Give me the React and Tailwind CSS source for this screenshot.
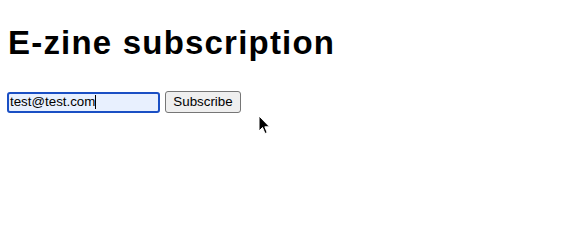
import React from "react";

export default function App() {
  return (
    <div className="relative w-[582px] h-[230px] bg-white text-black" style={{ fontFamily: '"Liberation Sans", Arial, sans-serif' }}>
      <div className="px-2 pt-[24px]">
        <h1 className="text-[33px] font-bold leading-[37px] m-0 tracking-[1.2px]">E-zine subscription</h1>
        <div className="flex items-center mt-[30px] gap-[5px]">
          <div className="w-[153px] h-[21px] ml-[-1px] border-2 border-[#1a4fc4] rounded-[3px] bg-[#e8f0fe] flex items-center px-[1px] text-[13.33px] leading-none">
            <span>test@test.com</span>
            <span className="inline-block w-[1px] h-[14px] bg-black"></span>
          </div>
          <div className="w-[76px] h-[22px] border border-[#767676] rounded-[3px] bg-[#efefef] flex items-center justify-center text-[13.33px] leading-none">
            Subscribe
          </div>
        </div>
      </div>
      <svg className="absolute left-[258px] top-[115px]" width="13" height="20" viewBox="0 0 13 20">
        <path d="M1 1 L1 16 L4.5 12.5 L7 18.5 L9.2 17.6 L6.8 11.8 L11.5 11.8 Z" fill="black" stroke="white" strokeWidth="1" strokeLinejoin="round" />
      </svg>
    </div>
  );
}
